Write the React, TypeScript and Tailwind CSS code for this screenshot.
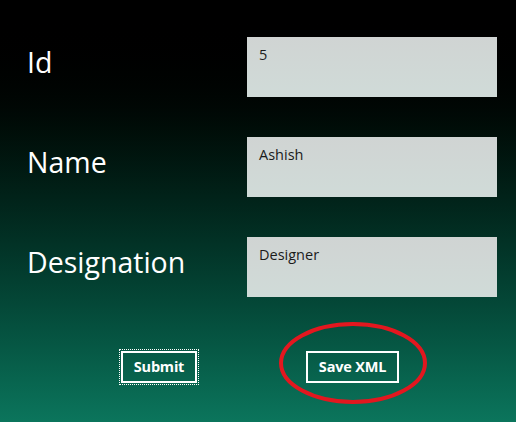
import React from "react";

const fields = [
  { label: "Id", value: "5" },
  { label: "Name", value: "Ashish" },
  { label: "Designation", value: "Designer" },
];

export default function App() {
  return (
    <div className="relative w-[516px] h-[422px] overflow-hidden bg-gradient-to-b from-black from-[3%] to-[#0b755c] font-['Open_Sans',sans-serif] text-white">
      {/* Form rows */}
      <div className="pt-[37px] flex flex-col gap-[40px]">
        {fields.map((f) => (
          <div key={f.label} className="flex h-[60px]">
            <div className="w-[247px] pl-[27px] pt-[11px] text-[28.5px] leading-none">
              {f.label}
            </div>
            <div className="w-[250px] h-[60px] bg-gradient-to-b from-[#d0d4d3] to-[#d0dbd8] px-[12px] pt-[7px] text-[14.5px] text-[#1b1b1b]">
              {f.value}
            </div>
          </div>
        ))}
      </div>

      {/* Buttons */}
      <div className="flex mt-[54px] pl-[121px]">
        <button className="h-[32px] w-[76px] border-2 border-white text-[14.5px] font-bold tracking-[-0.2px] outline outline-1 outline-dotted outline-white outline-offset-1">
          Submit
        </button>
        <button className="ml-[109px] h-[32px] w-[93px] border-2 border-white text-[14.5px] font-bold tracking-[-0.2px]">
          Save XML
        </button>
      </div>

      {/* Red annotation around Save XML */}
      <svg className="absolute left-[278px] top-[321px]" width="150" height="84" viewBox="0 0 150 84">
        <ellipse cx="75" cy="42" rx="72" ry="39" fill="none" stroke="#e3171f" strokeWidth="4" />
      </svg>
    </div>
  );
}
